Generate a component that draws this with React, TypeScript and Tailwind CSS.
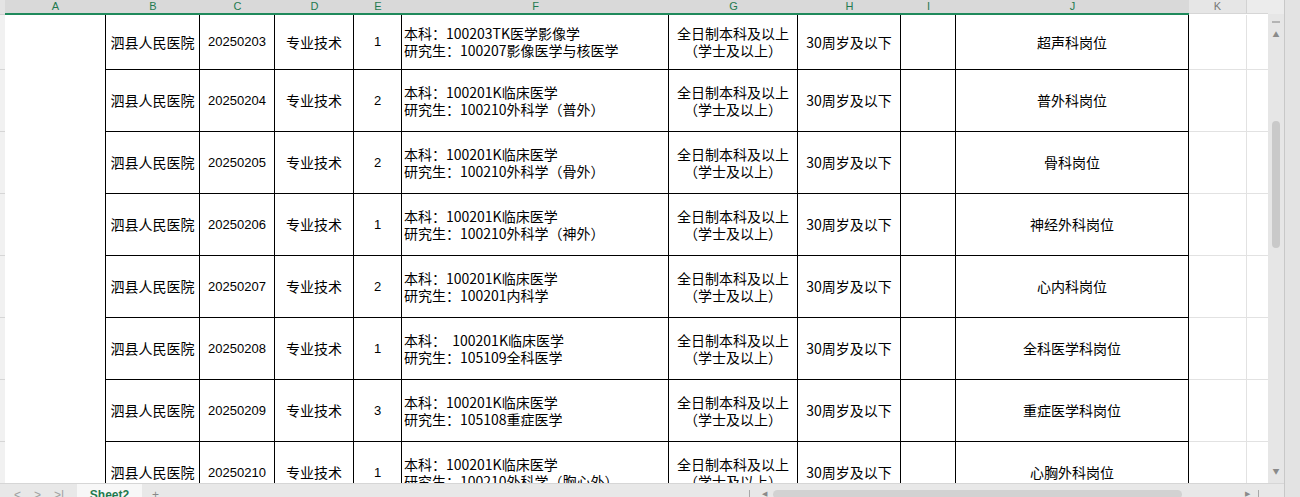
import React from 'react';

interface Row {
    code: string;
    num: string;
    major1: string;
    major2: string;
    post: string;
}

const rows: Row[] = [
    { code: '20250203', num: '1', major1: '本科：100203TK医学影像学', major2: '研究生：100207影像医学与核医学', post: '超声科岗位' },
    { code: '20250204', num: '2', major1: '本科：100201K临床医学', major2: '研究生：100210外科学（普外）', post: '普外科岗位' },
    { code: '20250205', num: '2', major1: '本科：100201K临床医学', major2: '研究生：100210外科学（骨外）', post: '骨科岗位' },
    { code: '20250206', num: '1', major1: '本科：100201K临床医学', major2: '研究生：100210外科学（神外）', post: '神经外科岗位' },
    { code: '20250207', num: '2', major1: '本科：100201K临床医学', major2: '研究生：100201内科学', post: '心内科岗位' },
    { code: '20250208', num: '1', major1: '本科：  100201K临床医学', major2: '研究生：105109全科医学', post: '全科医学科岗位' },
    { code: '20250209', num: '3', major1: '本科：100201K临床医学', major2: '研究生：105108重症医学', post: '重症医学科岗位' },
    { code: '20250210', num: '1', major1: '本科：100201K临床医学', major2: '研究生：100210外科学（胸心外）', post: '心胸外科岗位' },
];

const headers = [
    { label: 'A', w: 'w-[101px]' },
    { label: 'B', w: 'w-[94px]' },
    { label: 'C', w: 'w-[75px]' },
    { label: 'D', w: 'w-[79px]' },
    { label: 'E', w: 'w-[48px]' },
    { label: 'F', w: 'w-[267px]' },
    { label: 'G', w: 'w-[129px]' },
    { label: 'H', w: 'w-[103px]' },
    { label: 'I', w: 'w-[55px]' },
    { label: 'J', w: 'w-[233px]' },
];

const cell = 'flex items-center justify-center border-r border-b border-black shrink-0';

const App: React.FC = () => {
    return (
        <div className="w-[1300px] h-[497px] overflow-hidden flex bg-white text-black" style={{ fontFamily: "'Noto Sans CJK SC', sans-serif" }}>
            <div className="w-[1284px] flex flex-col shrink-0">
                <div className="h-[483px] flex overflow-hidden">
                    {/* sheet */}
                    <div className="w-[1268px] flex flex-col shrink-0 overflow-hidden">
                        <div className="h-[15px] flex shrink-0 text-[11px] leading-[13px]" style={{ fontFamily: "'Liberation Sans', sans-serif" }}>
                            <div className="w-[5px] bg-[#e4e4e4] border-b border-[#d0d0d0]" />
                            {headers.map(h => (
                                <div key={h.label} className={`${h.w} shrink-0 bg-[#d9d9d9] border-b-2 border-[#1f8a5c] text-center text-[#1f7a4f]`}>
                                    {h.label}
                                </div>
                            ))}
                            <div className="w-[58px] shrink-0 bg-[#e6e6e6] border-r border-[#d2d2d2] border-b border-b-[#d6d6d6] text-center text-[#777] h-[14px]">K</div>
                            <div className="w-[21px] shrink-0 bg-[#ececec] h-[14px] border-b border-[#d6d6d6]" />
                        </div>
                        {rows.map((r, i) => (
                            <div key={r.code} className={`flex shrink-0 text-[14px] ${i === 0 ? 'h-[55px]' : 'h-[62px]'}`}>
                                <div className="w-[5px] shrink-0 bg-[#f1f1f1] border-b border-[#d6d6d6]" />
                                <div className="w-[101px] shrink-0 border-r border-black" />
                                <div className={`${cell} w-[94px]`}>泗县人民医院</div>
                                <div className={`${cell} w-[75px] text-[13px]`} style={{ fontFamily: "'Liberation Sans', sans-serif" }}>{r.code}</div>
                                <div className={`${cell} w-[79px]`}>专业技术</div>
                                <div className={`${cell} w-[48px] text-[13px]`} style={{ fontFamily: "'Liberation Sans', sans-serif" }}>{r.num}</div>
                                <div className="w-[267px] shrink-0 flex flex-col justify-center pl-[2px] border-r border-b border-black leading-[17px] whitespace-pre">
                                    <span>{r.major1}</span>
                                    <span>{r.major2}</span>
                                </div>
                                <div className={`${cell} w-[129px] flex-col leading-[17px]`}>
                                    <span>全日制本科及以上</span>
                                    <span>（学士及以上）</span>
                                </div>
                                <div className={`${cell} w-[103px]`}>30周岁及以下</div>
                                <div className={`${cell} w-[55px]`} />
                                <div className={`${cell} w-[233px]`}>{r.post}</div>
                                <div className="w-[58px] shrink-0 border-r border-b border-[#e2e2e2]" />
                                <div className="w-[21px] shrink-0 border-b border-[#e2e2e2]" />
                            </div>
                        ))}
                    </div>
                    {/* vertical scrollbar */}
                    <div className="w-[16px] shrink-0 flex flex-col items-center bg-[#e6e6e6]">
                        <div className="h-[14px] w-full bg-[#ececec]" />
                        <div className="mt-[7px] w-[8px] h-[2px] bg-[#b4b4b4]" />
                        <div className="mt-[8px] text-[7px] leading-[7px] text-[#8a8a8a]">▲</div>
                        <div className="mt-[83px] w-[8px] h-[127px] rounded-full bg-[#c9c9c9]" />
                        <div className="mt-auto mb-[8px] text-[7px] leading-[7px] text-[#8a8a8a]">▼</div>
                    </div>
                </div>
                {/* bottom bar */}
                <div className="h-[14px] flex items-start bg-[#e8e8e8] border-t border-[#d6d6d6] text-[#a0a0a0] text-[12px] leading-[14px] overflow-hidden" style={{ fontFamily: "'Liberation Sans', sans-serif" }}>
                    <div className="w-[77px] shrink-0 flex gap-[13px] pl-[14px] pt-[4px]">
                        <span>&lt;</span>
                        <span>&gt;</span>
                        <span>&gt;|</span>
                    </div>
                    <div className="w-[65px] h-full shrink-0 bg-[#f7f7f7] text-center pt-[4px] font-bold text-[#1f7a4f]">Sheet2</div>
                    <div className="ml-[10px] pt-[4px] text-[#888]">+</div>
                    <div className="ml-[590px] mt-[6px] w-px h-[8px] bg-[#a8a8a8]" />
                    <div className="ml-[12px] mt-[6px] text-[7px] leading-[7px] text-[#8a8a8a]">◀</div>
                    <div className="ml-[6px] mt-[6px] w-[409px] h-[9px] rounded-full bg-[#d2d2d2]" />
                    <div className="ml-[63px] mt-[6px] text-[7px] leading-[7px] text-[#8a8a8a]">▶</div>
                    <div className="ml-[8px] mt-[6px] w-px h-[8px] bg-[#a8a8a8]" />
                </div>
            </div>
            <div className="w-[16px] shrink-0 bg-[#e3e3e3] border-l border-[#c8c8c8]" />
        </div>
    );
};

export default App;
